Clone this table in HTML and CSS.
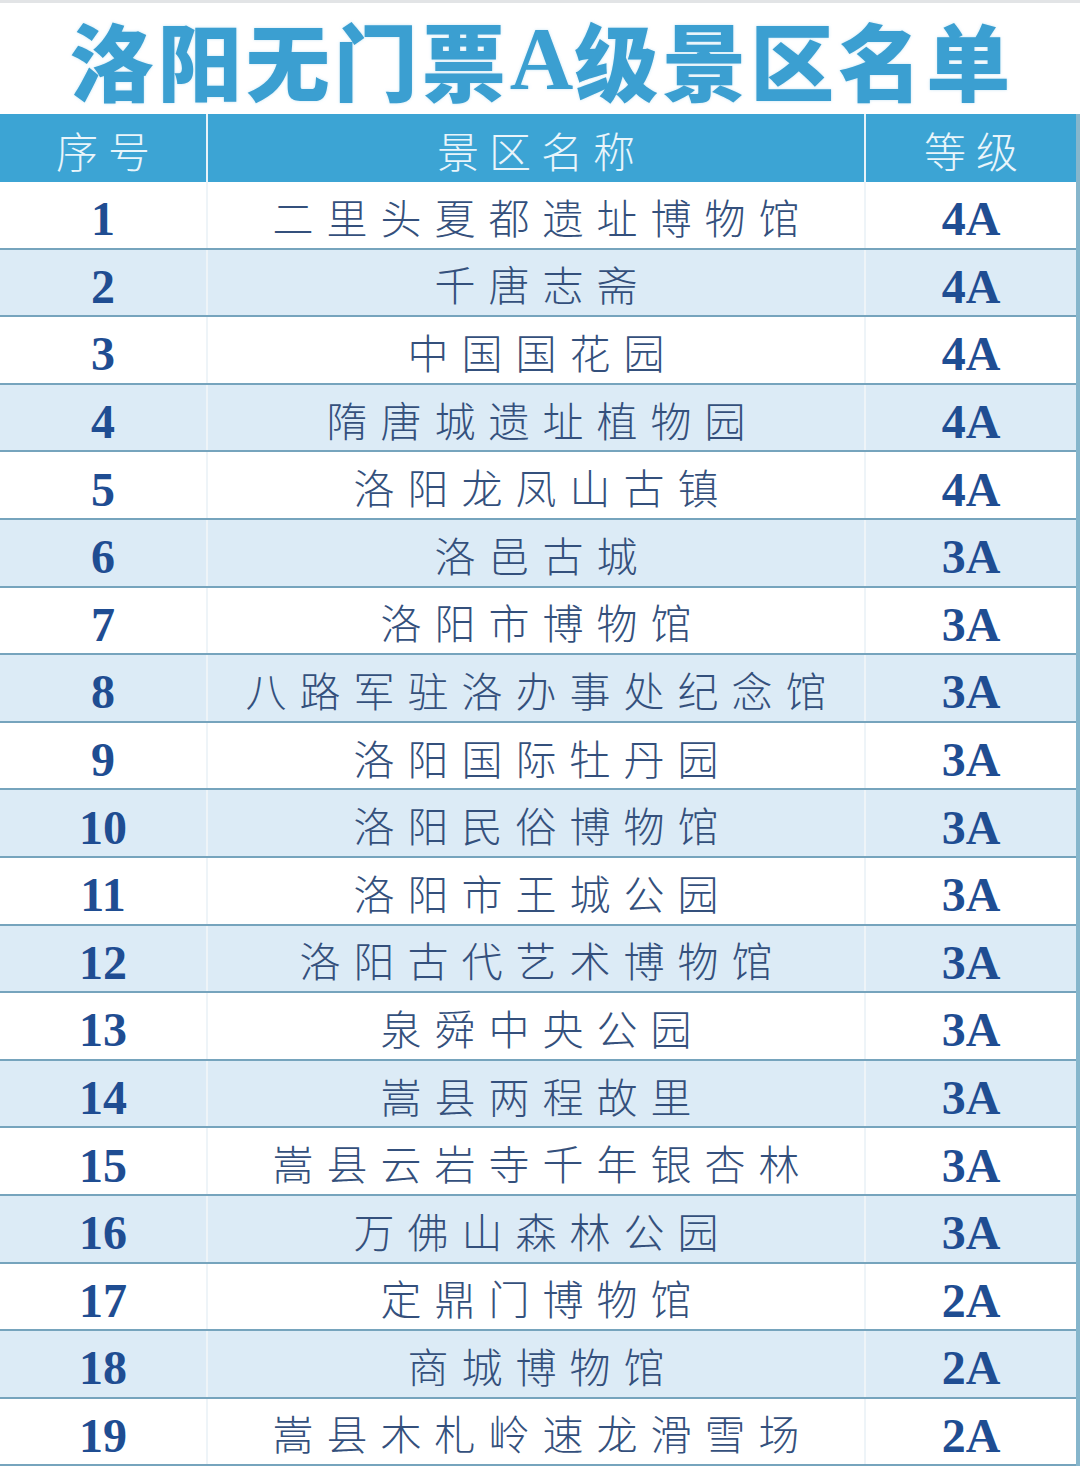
FILE: index.html
```html
<!DOCTYPE html>
<html lang="zh-CN">
<head>
<meta charset="utf-8">
<title>洛阳无门票A级景区名单</title>
<link rel="stylesheet" href="styles.css">
</head>
<body>
<div class="page">
  <div class="topline"></div>
  <h1 class="title">洛阳无门票<span class="latin">A</span>级景区名单</h1>
  <div class="table">
    <div class="row head">
      <div class="cell c1">序号</div>
      <div class="cell c2">景区名称</div>
      <div class="cell c3">等级</div>
    </div>
    <div class="row"><div class="cell c1 num">1</div><div class="cell c2 name">二里头夏都遗址博物馆</div><div class="cell c3 num">4A</div></div>
    <div class="row alt"><div class="cell c1 num">2</div><div class="cell c2 name">千唐志斋</div><div class="cell c3 num">4A</div></div>
    <div class="row"><div class="cell c1 num">3</div><div class="cell c2 name">中国国花园</div><div class="cell c3 num">4A</div></div>
    <div class="row alt"><div class="cell c1 num">4</div><div class="cell c2 name">隋唐城遗址植物园</div><div class="cell c3 num">4A</div></div>
    <div class="row"><div class="cell c1 num">5</div><div class="cell c2 name">洛阳龙凤山古镇</div><div class="cell c3 num">4A</div></div>
    <div class="row alt"><div class="cell c1 num">6</div><div class="cell c2 name">洛邑古城</div><div class="cell c3 num">3A</div></div>
    <div class="row"><div class="cell c1 num">7</div><div class="cell c2 name">洛阳市博物馆</div><div class="cell c3 num">3A</div></div>
    <div class="row alt"><div class="cell c1 num">8</div><div class="cell c2 name">八路军驻洛办事处纪念馆</div><div class="cell c3 num">3A</div></div>
    <div class="row"><div class="cell c1 num">9</div><div class="cell c2 name">洛阳国际牡丹园</div><div class="cell c3 num">3A</div></div>
    <div class="row alt"><div class="cell c1 num">10</div><div class="cell c2 name">洛阳民俗博物馆</div><div class="cell c3 num">3A</div></div>
    <div class="row"><div class="cell c1 num">11</div><div class="cell c2 name">洛阳市王城公园</div><div class="cell c3 num">3A</div></div>
    <div class="row alt"><div class="cell c1 num">12</div><div class="cell c2 name">洛阳古代艺术博物馆</div><div class="cell c3 num">3A</div></div>
    <div class="row"><div class="cell c1 num">13</div><div class="cell c2 name">泉舜中央公园</div><div class="cell c3 num">3A</div></div>
    <div class="row alt"><div class="cell c1 num">14</div><div class="cell c2 name">嵩县两程故里</div><div class="cell c3 num">3A</div></div>
    <div class="row"><div class="cell c1 num">15</div><div class="cell c2 name">嵩县云岩寺千年银杏林</div><div class="cell c3 num">3A</div></div>
    <div class="row alt"><div class="cell c1 num">16</div><div class="cell c2 name">万佛山森林公园</div><div class="cell c3 num">3A</div></div>
    <div class="row"><div class="cell c1 num">17</div><div class="cell c2 name">定鼎门博物馆</div><div class="cell c3 num">2A</div></div>
    <div class="row alt"><div class="cell c1 num">18</div><div class="cell c2 name">商城博物馆</div><div class="cell c3 num">2A</div></div>
    <div class="row"><div class="cell c1 num">19</div><div class="cell c2 name">嵩县木札岭速龙滑雪场</div><div class="cell c3 num">2A</div></div>
  </div>
</div>
</body>
</html>
```
FILE: styles.css
```css
* { box-sizing: border-box; }
html, body { margin: 0; padding: 0; background: #ffffff; }
body { width: 1080px; height: 1467px; overflow: hidden; }
.page { width: 1080px; display: flex; flex-direction: column; }
.topline { height: 3px; background: #e2e4e6; }
.title {
  margin: 0;
  height: 111px;
  display: flex;
  align-items: center;
  justify-content: center;
  font-family: "Noto Sans CJK SC", sans-serif;
  font-weight: 900;
  font-size: 84px;
  line-height: 1.25;
  letter-spacing: 4px;
  color: #3b9fd1;
  text-shadow: 0 0 3px rgba(160, 210, 235, 0.6);
  padding-left: 4px;
}
.title .latin {
  font-family: "Liberation Serif", "Times New Roman", serif;
  font-weight: bold;
  font-size: 88px;
  letter-spacing: 1px;
}
.table {
  display: flex;
  flex-direction: column;
  border-right: 4px solid #86b6cc;
}
.row {
  display: grid;
  grid-template-columns: 208px 658px 1fr;
  height: 67.6px;
  background: #ffffff;
  border-bottom: 2px solid #76a4bd;
}
.row.alt { background: #dcebf6; }
.row.head {
  height: 68px;
  background: #3ca4d4;
  border-bottom: none;
}
.cell {
  display: flex;
  align-items: center;
  justify-content: center;
}
.c1, .c2 { border-right: 2px solid #eef4f8; }
.head .c1, .head .c2 { border-right: 2px solid #e8f3f9; }
.head .cell {
  font-family: "Noto Sans CJK SC", sans-serif;
  font-weight: 300;
  font-size: 42px;
  letter-spacing: 10px;
  padding-left: 10px;
  color: #e9f5fb;
  padding-top: 2px;
}
.num {
  font-family: "Liberation Serif", "Times New Roman", serif;
  font-weight: bold;
  font-size: 48px;
  color: #1f4d92;
  padding-top: 8px;
}
.name {
  font-family: "Noto Sans CJK SC", sans-serif;
  font-weight: 300;
  font-size: 41px;
  letter-spacing: 13px;
  padding-left: 13px;
  color: #34507c;
  padding-top: 2px;
}
```
